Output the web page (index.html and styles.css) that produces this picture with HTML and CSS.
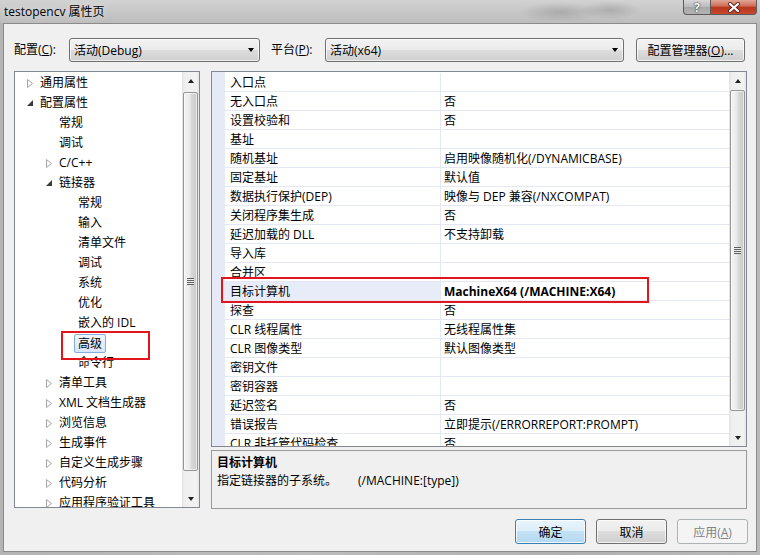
FILE: index.html
```html
<!DOCTYPE html>
<html>
<head>
<meta charset="utf-8">
<link rel="stylesheet" href="styles.css">
</head>
<body>
<div class="window">
  <div class="titlebar">
    <span class="title">testopencv 属性页</span>
    <div class="caption-btns">
      <div class="cap cap-help">?</div>
      <div class="cap cap-close">
        <svg width="14" height="11" viewBox="0 0 14 11">
          <path d="M3 2 L11 9 M11 2 L3 9" stroke="#5a2a20" stroke-width="4" stroke-linecap="round"/>
          <path d="M3 2 L11 9 M11 2 L3 9" stroke="#fff" stroke-width="2.2" stroke-linecap="round"/>
        </svg>
      </div>
    </div>
  </div>

  <div class="client">
    <div class="toprow">
      <span class="lbl lbl-config">配置(<u>C</u>):</span>
      <div class="combo combo-config"><span>活动(Debug)</span><i class="drop"></i></div>
      <span class="lbl lbl-platform">平台(<u>P</u>):</span>
      <div class="combo combo-platform"><span>活动(x64)</span><i class="drop"></i></div>
      <button class="btn btn-mgr">配置管理器(<u>O</u>)...</button>
    </div>

    <div class="main">
      <div class="tree">
        <ul class="tree-items">
          <li class="l0"><span class="exp"><svg width="6" height="9"><polygon points="0.5,0.5 5.5,4.5 0.5,8.5" fill="#fff" stroke="#a6a6a6"/></svg></span>通用属性</li>
          <li class="l0"><span class="exp"><svg width="6" height="6"><polygon points="6,0 6,6 0,6" fill="#3a3a3a"/></svg></span>配置属性</li>
          <li class="l1"><span class="exp"></span>常规</li>
          <li class="l1"><span class="exp"></span>调试</li>
          <li class="l1"><span class="exp"><svg width="6" height="9"><polygon points="0.5,0.5 5.5,4.5 0.5,8.5" fill="#fff" stroke="#a6a6a6"/></svg></span>C/C++</li>
          <li class="l1"><span class="exp"><svg width="6" height="6"><polygon points="6,0 6,6 0,6" fill="#3a3a3a"/></svg></span>链接器</li>
          <li class="l2"><span class="exp"></span>常规</li>
          <li class="l2"><span class="exp"></span>输入</li>
          <li class="l2"><span class="exp"></span>清单文件</li>
          <li class="l2"><span class="exp"></span>调试</li>
          <li class="l2"><span class="exp"></span>系统</li>
          <li class="l2"><span class="exp"></span>优化</li>
          <li class="l2"><span class="exp"></span>嵌入的 IDL</li>
          <li class="l2"><span class="exp"></span><span class="sel">高级</span></li>
          <li class="l2"><span class="exp"></span>命令行</li>
          <li class="l1"><span class="exp"><svg width="6" height="9"><polygon points="0.5,0.5 5.5,4.5 0.5,8.5" fill="#fff" stroke="#a6a6a6"/></svg></span>清单工具</li>
          <li class="l1"><span class="exp"><svg width="6" height="9"><polygon points="0.5,0.5 5.5,4.5 0.5,8.5" fill="#fff" stroke="#a6a6a6"/></svg></span>XML 文档生成器</li>
          <li class="l1"><span class="exp"><svg width="6" height="9"><polygon points="0.5,0.5 5.5,4.5 0.5,8.5" fill="#fff" stroke="#a6a6a6"/></svg></span>浏览信息</li>
          <li class="l1"><span class="exp"><svg width="6" height="9"><polygon points="0.5,0.5 5.5,4.5 0.5,8.5" fill="#fff" stroke="#a6a6a6"/></svg></span>生成事件</li>
          <li class="l1"><span class="exp"><svg width="6" height="9"><polygon points="0.5,0.5 5.5,4.5 0.5,8.5" fill="#fff" stroke="#a6a6a6"/></svg></span>自定义生成步骤</li>
          <li class="l1"><span class="exp"><svg width="6" height="9"><polygon points="0.5,0.5 5.5,4.5 0.5,8.5" fill="#fff" stroke="#a6a6a6"/></svg></span>代码分析</li>
          <li class="l1"><span class="exp"><svg width="6" height="9"><polygon points="0.5,0.5 5.5,4.5 0.5,8.5" fill="#fff" stroke="#a6a6a6"/></svg></span>应用程序验证工具</li>
        </ul>
        <div class="vscroll vscroll-tree">
          <div class="sb-btn"><i class="up"></i></div>
          <div class="sb-track"><div class="thumb"><i class="grip"></i></div></div>
          <div class="sb-btn"><i class="down"></i></div>
        </div>
      </div>

      <div class="rightcol">
        <div class="grid">
          <div class="gutter"></div>
          <div class="rows">
            <div class="row"><div class="name">入口点</div><div class="val"></div></div>
            <div class="row"><div class="name">无入口点</div><div class="val">否</div></div>
            <div class="row"><div class="name">设置校验和</div><div class="val">否</div></div>
            <div class="row"><div class="name">基址</div><div class="val"></div></div>
            <div class="row"><div class="name">随机基址</div><div class="val">启用映像随机化(/DYNAMICBASE)</div></div>
            <div class="row"><div class="name">固定基址</div><div class="val">默认值</div></div>
            <div class="row"><div class="name">数据执行保护(DEP)</div><div class="val">映像与 DEP 兼容(/NXCOMPAT)</div></div>
            <div class="row"><div class="name">关闭程序集生成</div><div class="val">否</div></div>
            <div class="row"><div class="name">延迟加载的 DLL</div><div class="val">不支持卸载</div></div>
            <div class="row"><div class="name">导入库</div><div class="val"></div></div>
            <div class="row"><div class="name">合并区</div><div class="val"></div></div>
            <div class="row row-sel"><div class="name">目标计算机</div><div class="val"><b>MachineX64 (/MACHINE:X64)</b></div></div>
            <div class="row"><div class="name">探查</div><div class="val">否</div></div>
            <div class="row"><div class="name">CLR 线程属性</div><div class="val">无线程属性集</div></div>
            <div class="row"><div class="name">CLR 图像类型</div><div class="val">默认图像类型</div></div>
            <div class="row"><div class="name">密钥文件</div><div class="val"></div></div>
            <div class="row"><div class="name">密钥容器</div><div class="val"></div></div>
            <div class="row"><div class="name">延迟签名</div><div class="val">否</div></div>
            <div class="row"><div class="name">错误报告</div><div class="val">立即提示(/ERRORREPORT:PROMPT)</div></div>
            <div class="row"><div class="name">CLR 非托管代码检查</div><div class="val">否</div></div>
          </div>
          <div class="vscroll vscroll-grid">
            <div class="sb-btn"><i class="up"></i></div>
            <div class="sb-track"><div class="thumb"><i class="grip"></i></div></div>
            <div class="sb-btn"><i class="down"></i></div>
          </div>
        </div>
        <div class="desc">
          <div class="desc-title">目标计算机</div>
          <div class="desc-text">指定链接器的子系统。<span class="switch">(/MACHINE:[type])</span></div>
        </div>
      </div>
    </div>

    <div class="btnrow">
      <button class="btn btn-default">确定</button>
      <button class="btn">取消</button>
      <button class="btn btn-disabled">应用(<u>A</u>)</button>
    </div>
  </div>

  <!-- red annotation boxes drawn on the screenshot -->
  <div class="mark mark-tree"></div>
  <div class="mark mark-grid"></div>
</div>
</body>
</html>
```

FILE: styles.css
```css
body {
    margin: 0;
    background: #fff;
}
.window {
    position: relative;
    width: 760px;
    height: 555px;
    display: flex;
    flex-direction: column;
    overflow: hidden;
    font-family: "Open Sans", "Noto Sans CJK SC", sans-serif;
    font-size: 12px;
    color: #000;
    background: linear-gradient(to right, #b4b4b4, #bcbcbc 40%, #b0b0b0 75%, #bababa);
}

/* title bar */
.titlebar {
    height: 23px;
    display: flex;
    align-items: flex-start;
    background:
        radial-gradient(ellipse 40px 10px at 560px 12px, rgba(120,120,120,.35), transparent),
        radial-gradient(ellipse 30px 9px at 610px 10px, rgba(110,110,110,.3), transparent),
        linear-gradient(#d2d2d2, #c6c6c6 55%, #bdbdbd);
}
.title {
    padding: 1px 0 0 4px;
    line-height: 21px;
    text-shadow: 0 0 6px rgba(255,255,255,.8);
}
.caption-btns {
    margin-left: auto;
    margin-right: 3px;
    display: flex;
}
.cap {
    height: 15px;
    box-sizing: border-box;
    border: 1px solid #5b5b5b;
    border-top: none;
    display: flex;
    align-items: center;
    justify-content: center;
}
.cap-help {
    width: 27px;
    border-radius: 0 0 0 4px;
    border-right: none;
    background: linear-gradient(#d8d8d8, #b9b9b9 50%, #a6a6a6 50%, #b4b4b4);
    color: #fff;
    font-weight: bold;
    font-size: 12px;
    line-height: 13px;
    text-shadow: 0 0 2px #333, 0 0 1px #333;
}
.cap-close {
    width: 47px;
    border-radius: 0 0 4px 0;
    background: linear-gradient(#e0a796, #cf6a55 45%, #b8351c 50%, #c74a2d);
}

/* client area */
.client {
    flex: 1;
    margin: 0 3px 3px 3px;
    border: 1px solid #8b8b8b;
    background: #f0f0f0;
    display: flex;
    flex-direction: column;
}

.toprow {
    margin: 14px 0 0 10px;
    height: 24px;
    display: flex;
    align-items: center;
}
.lbl {
    line-height: 24px;
    white-space: nowrap;
}
.lbl-config { width: 55px; }
.lbl-platform { width: 54px; margin-left: 11px; }
.combo {
    box-sizing: border-box;
    height: 24px;
    border: 1px solid #707070;
    border-radius: 3px;
    background: linear-gradient(#f2f2f2, #ebebeb 50%, #dddddd 50%, #cfcfcf);
    box-shadow: inset 0 0 0 1px rgba(255,255,255,.6);
    display: flex;
    align-items: center;
    padding-left: 4px;
}
.combo-config { width: 191px; }
.combo-platform { width: 299px; }
.drop {
    margin-left: auto;
    margin-right: 5px;
    width: 0;
    height: 0;
    border-left: 3.5px solid transparent;
    border-right: 3.5px solid transparent;
    border-top: 4px solid #000;
}

.btn {
    box-sizing: border-box;
    height: 25px;
    padding: 0;
    border: 1px solid #707070;
    border-radius: 3px;
    background: linear-gradient(#f2f2f2, #ebebeb 50%, #dddddd 50%, #cfcfcf);
    box-shadow: inset 0 0 0 1px rgba(255,255,255,.7);
    font: inherit;
    color: #000;
}
.btn-mgr {
    margin-left: 12px;
    width: 109px;
    height: 24px;
}

/* main area */
.main {
    margin-top: 9px;
    height: 438px;
    display: flex;
}

.tree {
    box-sizing: border-box;
    margin-left: 10px;
    width: 186px;
    height: 437px;
    border: 1px solid #828790;
    background: #fff;
    display: flex;
    overflow: hidden;
}
.tree-items {
    flex: 1;
    margin: 0;
    padding: 1px 0 0 0;
    list-style: none;
    overflow: hidden;
}
.tree-items li {
    height: 20px;
    line-height: 20px;
    display: flex;
    align-items: center;
    white-space: nowrap;
}
.tree-items .l0 { padding-left: 12px; }
.tree-items .l1 { padding-left: 31px; }
.tree-items .l2 { padding-left: 50px; }
.exp {
    width: 13px;
    flex: none;
    display: flex;
    align-items: center;
}
.exp svg { display: block; }
.sel {
    margin-left: -4px;
    padding: 0 3px;
    line-height: 17px;
    border: 1px solid #84acdd;
    border-radius: 2px;
    background: linear-gradient(#eef5fd, #d7e7fa);
}

/* scrollbars */
.vscroll {
    width: 17px;
    flex: none;
    display: flex;
    flex-direction: column;
    background: linear-gradient(to right, #e2e2e2, #efefef 15%, #f2f2f2 85%, #e6e6e6);
}
.sb-btn {
    height: 17px;
    display: flex;
    align-items: center;
    justify-content: center;
}
.sb-btn .up, .sb-btn .down {
    width: 0;
    height: 0;
    border-left: 3.5px solid transparent;
    border-right: 3.5px solid transparent;
}
.sb-btn .up { border-bottom: 4px solid #222; }
.sb-btn .down { border-top: 4px solid #222; }
.sb-track {
    flex: 1;
    display: flex;
    flex-direction: column;
}
.thumb {
    flex: 1;
    margin: 0 1px;
    border: 1px solid #959595;
    border-radius: 2px;
    background: linear-gradient(to right, #f5f5f5, #e9e9e9 45%, #d9d9d9 55%, #c9c9c9);
    box-shadow: inset 0 0 0 1px rgba(255,255,255,.6);
    display: flex;
    align-items: center;
    justify-content: center;
}
.vscroll-tree .thumb { margin-top: 3px; margin-bottom: 19px; }
.vscroll-grid .thumb { margin-top: 1px; margin-bottom: 18px; }
.grip {
    width: 7px;
    height: 7px;
    background: repeating-linear-gradient(#5e5e5e 0 1px, #eeeeee 1px 2px);
}

/* property grid */
.rightcol {
    margin-left: 11px;
    width: 536px;
    display: flex;
    flex-direction: column;
}
.grid {
    box-sizing: border-box;
    height: 376px;
    border: 1px solid #828790;
    background: #fff;
    display: flex;
    overflow: hidden;
}
.gutter {
    width: 13px;
    flex: none;
    background: #e6eaf6;
}
.rows {
    flex: 1;
    padding-top: 1px;
    overflow: hidden;
}
.row {
    box-sizing: border-box;
    height: 19px;
    display: flex;
    border-bottom: 1px solid #e4e8f4;
    line-height: 20px;
    white-space: nowrap;
}
.row .name {
    box-sizing: border-box;
    width: 216px;
    flex: none;
    padding-left: 5px;
    border-right: 1px solid #e4e8f4;
}
.row .val {
    flex: 1;
    padding-left: 3px;
}
.row-sel .name { background: #e8ecf8; }

.desc {
    box-sizing: border-box;
    margin-top: 3px;
    height: 59px;
    border: 1px solid #9a9a9a;
    padding: 3px 5px 0 5px;
    line-height: 18px;
}
.desc-title { font-weight: bold; }
.switch { margin-left: 21px; }

/* dialog buttons */
.btnrow {
    margin-top: 10px;
    padding-right: 8px;
    display: flex;
    justify-content: flex-end;
    gap: 10px;
}
.btnrow .btn { width: 71px; }
.btn-default {
    border-color: #3c7fb1;
    background: linear-gradient(#eaf5fc, #dcedf9 50%, #c4e2f6 50%, #b3d8f1);
    box-shadow: inset 0 0 0 1px rgba(255,255,255,.8);
}
.btn-disabled {
    border-color: #adb2b5;
    background: #f4f4f4;
    box-shadow: none;
    color: #838383;
}

/* red annotations */
.mark {
    position: absolute;
    box-sizing: border-box;
    border: 2px solid #e3141c;
}
.mark-tree { left: 61px; top: 331px; width: 89px; height: 29px; }
.mark-grid { left: 221px; top: 277px; width: 428px; height: 26px; }
```
